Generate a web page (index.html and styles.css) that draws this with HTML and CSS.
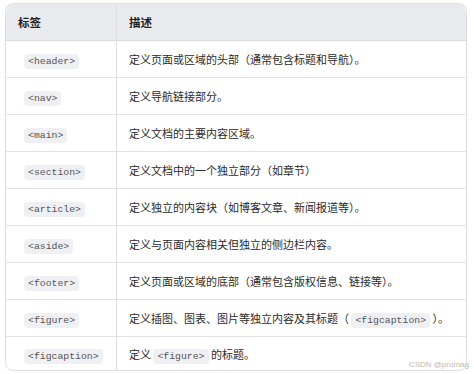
FILE: index.html
```html
<!DOCTYPE html>
<html lang="zh">
<head>
<meta charset="utf-8">
<link rel="stylesheet" href="styles.css">
</head>
<body>
<div class="wrap">
  <table class="tbl">
    <thead>
      <tr><th class="c1">标签</th><th>描述</th></tr>
    </thead>
    <tbody>
      <tr><td class="c1"><code>&lt;header&gt;</code></td><td>定义页面或区域的头部（通常包含标题和导航）。</td></tr>
      <tr><td class="c1"><code>&lt;nav&gt;</code></td><td>定义导航链接部分。</td></tr>
      <tr><td class="c1"><code>&lt;main&gt;</code></td><td>定义文档的主要内容区域。</td></tr>
      <tr><td class="c1"><code>&lt;section&gt;</code></td><td>定义文档中的一个独立部分（如章节）</td></tr>
      <tr><td class="c1"><code>&lt;article&gt;</code></td><td>定义独立的内容块（如博客文章、新闻报道等）。</td></tr>
      <tr><td class="c1"><code>&lt;aside&gt;</code></td><td>定义与页面内容相关但独立的侧边栏内容。</td></tr>
      <tr><td class="c1"><code>&lt;footer&gt;</code></td><td>定义页面或区域的底部（通常包含版权信息、链接等）。</td></tr>
      <tr><td class="c1"><code>&lt;figure&gt;</code></td><td>定义插图、图表、图片等独立内容及其标题（ <code>&lt;figcaption&gt;</code> ）。</td></tr>
      <tr class="last"><td class="c1"><code>&lt;figcaption&gt;</code></td><td>定义 <code>&lt;figure&gt;</code> 的标题。</td></tr>
    </tbody>
  </table>
  <div class="mark">CSDN @promag</div>
</div>
</body>
</html>
```
FILE: styles.css
```css
html, body {
  margin: 0;
  padding: 0;
  background: #ffffff;
}
body {
  font-family: "Noto Sans CJK SC", "Noto Sans", sans-serif;
  color: #2b2b2b;
}
.wrap {
  position: relative;
  padding: 3px 0 0 5px;
  width: 474px;
  height: 374px;
  box-sizing: border-box;
}
.tbl {
  width: 462px;
  border-collapse: separate;
  border-spacing: 0;
  border: 1px solid #dedfe3;
  border-radius: 8px;
  overflow: hidden;
  font-size: 11px;
  table-layout: fixed;
}
.tbl th, .tbl td {
  text-align: left;
  padding: 0 0 0 12px;
  border-bottom: 1px solid #e3e4e8;
  white-space: nowrap;
  vertical-align: middle;
}
.tbl th {
  height: 36px;
  background: #e9eaee;
  font-weight: 700;
  font-size: 11.5px;
  color: #1f1f1f;
  border-bottom: 1px solid #d9dade;
}
.tbl td {
  height: 36px;
}
.tbl .c1 {
  width: 98px;
  border-right: 1px solid #dedfe3;
}
.tbl td.c1 {
  padding-left: 18px;
}
.tbl th.c1 {
  padding-left: 12px;
}
.tbl tr.last td {
  border-bottom: none;
  height: 33px;
}
code {
  font-family: "Liberation Mono", "DejaVu Sans Mono", monospace;
  font-size: 9.8px;
  color: #555555;
  background: #eff0f3;
  padding: 2px 4px;
  border-radius: 4px;
}
.mark {
  position: absolute;
  right: 5px;
  bottom: 5px;
  font-family: "Liberation Sans", sans-serif;
  font-size: 8px;
  color: #b9b9b9;
}
```
